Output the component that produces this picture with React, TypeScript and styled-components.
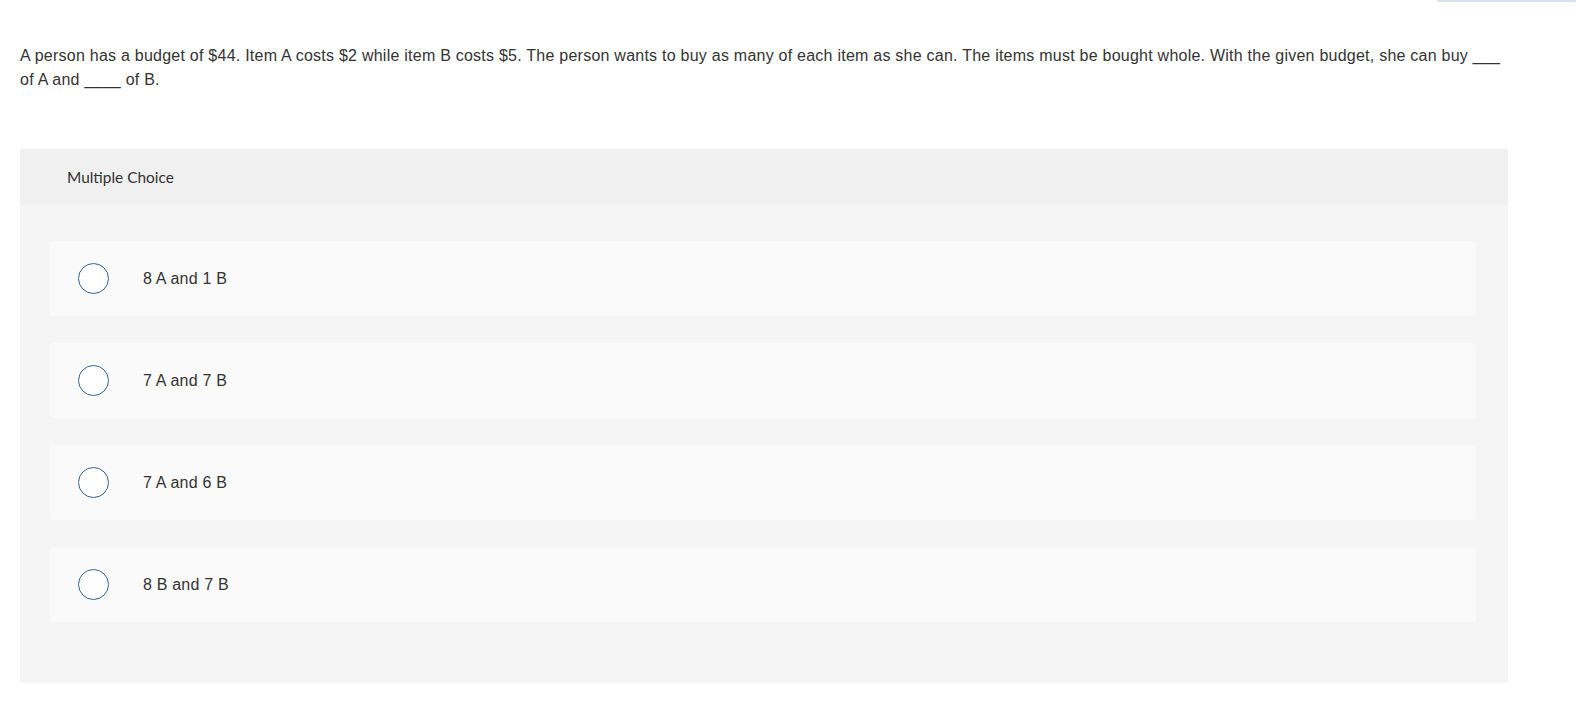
import React from "react";
import styled, { createGlobalStyle } from "styled-components";

const Global = createGlobalStyle`
  html, body { margin: 0; padding: 0; background: #ffffff; }
  body { font-family: "Liberation Sans", Arial, sans-serif; color: #333333; }
`;

const Page = styled.div`
  position: relative;
  padding: 44px 0 24px 20px;
`;

const TopBar = styled.div`
  position: absolute;
  top: 0;
  right: 0;
  width: 139px;
  height: 2px;
  background: #d6e2ef;
  border-bottom-left-radius: 3px;
`;

const Question = styled.p`
  margin: 0;
  width: 1492px;
  font-size: 16px;
  line-height: 24px;
  letter-spacing: 0.24px;
  color: #333333;
`;

const Panel = styled.section`
  margin-top: 57px;
  width: 1488px;
  background: #f5f5f5;
  border-radius: 3px;
  overflow: hidden;
`;

const PanelHeader = styled.div`
  height: 56px;
  display: flex;
  align-items: center;
  padding-left: 47px;
  background: #f0f0f0;
  font-family: Lato, "Open Sans", sans-serif;
  font-size: 15.4px;
  color: #333333;
`;

const Options = styled.div`
  display: flex;
  flex-direction: column;
  gap: 27px;
  padding: 36px 32px 61px 30px;
`;

const Option = styled.label`
  height: 75px;
  display: flex;
  align-items: center;
  padding-left: 28px;
  background: #fafafa;
  border-radius: 4px;
  cursor: pointer;
`;

const Radio = styled.span`
  box-sizing: border-box;
  width: 31px;
  height: 31px;
  border-radius: 50%;
  border: 1.5px solid #2d6399;
  background: #ffffff;
  flex-shrink: 0;
`;

const OptionText = styled.span`
  margin-left: 34px;
  margin-top: 1px;
  font-size: 16px;
  letter-spacing: 0.2px;
  color: #333333;
`;

const choices = ["8 A and 1 B", "7 A and 7 B", "7 A and 6 B", "8 B and 7 B"];

export default function App() {
  return (
    <>
      <Global />
      <Page>
        <TopBar />
        <Question>
          A person has a budget of $44. Item A costs $2 while item B costs $5. The person wants to buy as many of
          each item as she can. The items must be bought whole. With the given budget, she can buy ___ of A and ____ of B.
        </Question>
        <Panel>
          <PanelHeader>Multiple Choice</PanelHeader>
          <Options>
            {choices.map((c) => (
              <Option key={c}>
                <Radio />
                <OptionText>{c}</OptionText>
              </Option>
            ))}
          </Options>
        </Panel>
      </Page>
    </>
  );
}
